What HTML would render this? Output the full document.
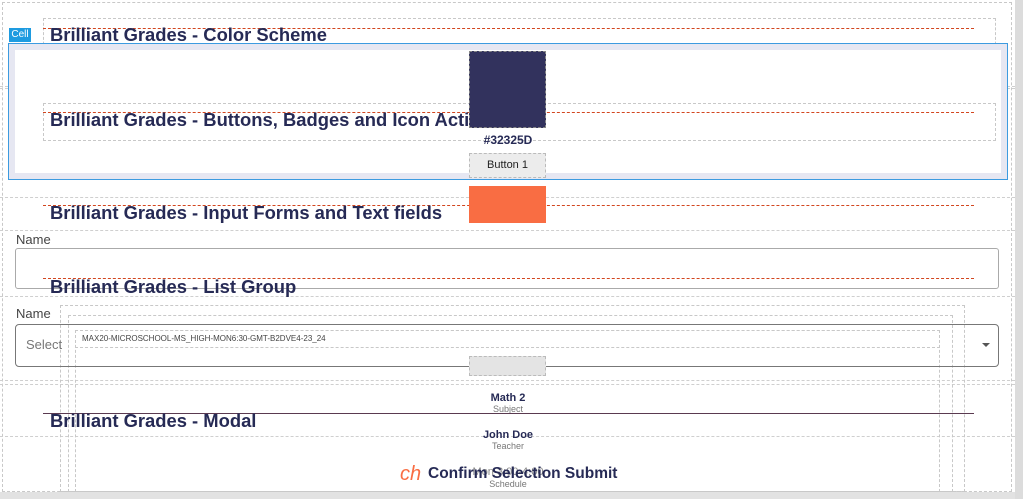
<!DOCTYPE html>
<html><head><meta charset="utf-8"><style>
*{margin:0;padding:0;box-sizing:border-box}
body{width:1023px;height:499px;position:relative;overflow:hidden;background:#fff;font-family:"Liberation Sans",Arial,sans-serif;color:#2b2d55}
.a{position:absolute}
.d{position:absolute;border:1px dashed #c8c8c8}
.h{position:absolute;font-weight:bold;font-size:18.4px;color:#262a55;white-space:nowrap;line-height:20px}
.r{position:absolute;height:0;border-top:1px dashed #d2461f;left:43px;width:931px}
.hl{position:absolute;left:0;width:1015px;height:0;border-top:1px dashed #cfcfcf}
.sm{position:absolute;font-size:9px;color:#777;text-align:center;width:80px;left:468px}
.bd{position:absolute;font-size:11px;font-weight:bold;color:#262a55;text-align:center;width:80px;left:468px}
</style></head><body>
<div class="a" style="left:1015px;top:0;width:8px;height:499px;background:#dcdcdc"></div>
<div class="a" style="left:0;top:492px;width:1015px;height:7px;background:#e2e2e2"></div>
<div class="d" style="left:2px;top:2px;width:1010px;height:490px"></div>
<div class="d" style="left:43px;top:18px;width:953px;height:36px"></div>
<div class="hl" style="top:86px"></div><div class="hl" style="top:88px"></div>
<div class="hl" style="top:197px"></div><div class="hl" style="top:230px"></div>
<div class="hl" style="top:296px"></div><div class="hl" style="top:380px"></div>
<div class="hl" style="top:384px"></div><div class="hl" style="top:436px"></div>
<div class="d" style="left:60px;top:305px;width:905px;height:187px"></div>
<div class="d" style="left:68px;top:315px;width:885px;height:177px"></div>
<div class="d" style="left:75px;top:330px;width:865px;height:162px"></div>
<!-- cell -->
<div class="a" style="left:8px;top:43px;width:1000px;height:137px;border:1px solid #3c9be0;background:#e6e7f2"></div>
<div class="a" style="left:15px;top:50px;width:986px;height:123px;background:#fff"></div>
<div class="d" style="left:43px;top:103px;width:953px;height:38px"></div>
<div class="a" style="left:9px;top:28px;width:22px;height:14px;background:#1e9be0;color:#fff;font-size:10px;line-height:14px;text-align:center">Cell</div>
<!-- headings -->
<div class="r" style="top:28px"></div><div class="h" style="left:50px;top:25px">Brilliant Grades - Color Scheme</div>
<div class="r" style="top:112px"></div><div class="h" style="left:50px;top:110px">Brilliant Grades - Buttons, Badges and Icon Acti</div>
<div class="r" style="top:205px"></div><div class="h" style="left:50px;top:203px">Brilliant Grades - Input Forms and Text fields</div>
<!-- swatches -->
<div class="a" style="left:469px;top:51px;width:77px;height:77px;background:#32325d;border:1px dashed #888;z-index:5"></div>
<div class="bd" style="top:133px;font-size:12px">#32325D</div>
<div class="a" style="left:469px;top:153px;width:77px;height:25px;background:#ececec;border:1px dashed #bbb;font-size:11px;text-align:center;line-height:23px;color:#222">Button 1</div>
<div class="a" style="left:469px;top:186px;width:77px;height:37px;background:#f96d43;z-index:5"></div>
<div class="a" style="left:16px;top:232px;font-size:13px;color:#444">Name</div>
<div class="a" style="left:15px;top:248px;width:984px;height:41px;border:1px solid #aaa;border-radius:3px"></div>
<div class="r" style="top:278px"></div><div class="h" style="left:50px;top:277px">Brilliant Grades - List Group</div>
<div class="a" style="left:16px;top:306px;font-size:13px;color:#444">Name</div>
<div class="a" style="left:15px;top:324px;width:984px;height:43px;border:1px solid #777;border-radius:4px"></div>
<div class="a" style="left:26px;top:337px;font-size:13px;color:#777">Select</div>
<div class="a" style="left:982px;top:343px;width:0;height:0;border-left:4px solid transparent;border-right:4px solid transparent;border-top:4px solid #555"></div>
<div class="d" style="left:75px;top:330px;width:865px;height:18px"></div>
<div class="a" style="left:82px;top:334px;font-size:8px;color:#444">MAX20-MICROSCHOOL-MS_HIGH-MON6:30-GMT-B2DVE4-23_24</div>
<div class="a" style="left:469px;top:356px;width:77px;height:20px;background:#e4e4e4;border:1px dashed #bbb"></div>
<div class="bd" style="top:392px">Math 2</div><div class="sm" style="top:404px">Subject</div>
<div class="a" style="left:43px;top:413px;width:931px;border-top:1px solid #5a3a50"></div>
<div class="h" style="left:50px;top:411px">Brilliant Grades - Modal</div>
<div class="bd" style="top:429px">John Doe</div><div class="sm" style="top:441px">Teacher</div>
<div class="sm" style="top:466px;font-size:11px;color:#888">Mon 3:00-4:00</div>
<div class="sm" style="top:479px">Schedule</div>
<div class="a" style="left:400px;top:463px;font-size:20px;font-style:italic;color:#f96d43">ch</div>
<div class="a" style="left:428px;top:465px;font-size:15.5px;font-weight:bold;color:#262a55;white-space:nowrap">Confirm Selection Submit</div>
</body></html>
